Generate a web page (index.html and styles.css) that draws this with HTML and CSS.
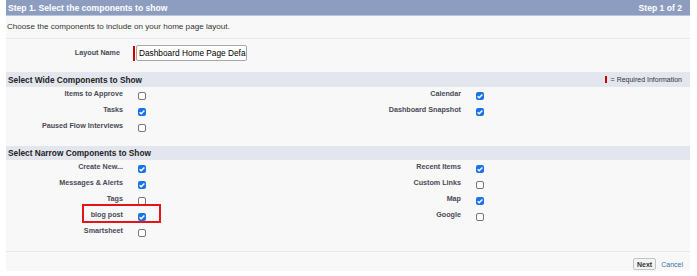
FILE: index.html
```html
<!DOCTYPE html>
<html>
<head>
<meta charset="utf-8">
<link rel="stylesheet" href="styles.css">
</head>
<body>
<div class="panel">
  <div class="pb-header">
    <span class="pb-title">Step 1. Select the components to show</span>
    <span class="pb-step">Step 1 of 2</span>
  </div>
  <div class="intro">Choose the components to include on your home page layout.</div>
  <div class="layout-row">
    <div class="label">Layout Name</div>
    <div class="data"><span class="req-bar"></span><span class="text-input">Dashboard Home Page Defa</span></div>
  </div>

  <div class="section-head">
    <span>Select Wide Components to Show</span>
    <span class="req-note"><span class="req-mark"></span>= Required Information</span>
  </div>
  <div class="grid wide">
    <div class="label">Items to Approve</div><div class="data"><span class="cb"></span></div>
    <div class="label">Calendar</div><div class="data"><span class="cb on"></span></div>
    <div class="label">Tasks</div><div class="data"><span class="cb on"></span></div>
    <div class="label">Dashboard Snapshot</div><div class="data"><span class="cb on"></span></div>
    <div class="label">Paused Flow Interviews</div><div class="data"><span class="cb"></span></div>
    <div class="label"></div><div class="data"></div>
  </div>

  <div class="section-head narrow-head">
    <span>Select Narrow Components to Show</span>
  </div>
  <div class="grid narrow">
    <div class="label">Create New...</div><div class="data"><span class="cb on"></span></div>
    <div class="label">Recent Items</div><div class="data"><span class="cb on"></span></div>
    <div class="label">Messages &amp; Alerts</div><div class="data"><span class="cb on"></span></div>
    <div class="label">Custom Links</div><div class="data"><span class="cb"></span></div>
    <div class="label">Tags</div><div class="data"><span class="cb"></span></div>
    <div class="label">Map</div><div class="data"><span class="cb on"></span></div>
    <div class="label">blog post</div><div class="data"><span class="cb on"></span></div>
    <div class="label">Google</div><div class="data"><span class="cb"></span></div>
    <div class="label">Smartsheet</div><div class="data"><span class="cb"></span></div>
    <div class="label"></div><div class="data"></div>
    <div class="highlight"></div>
  </div>

  <div class="footer">
    <span class="btn">Next</span>
    <span class="link">Cancel</span>
  </div>
</div>
</body>
</html>
```
FILE: styles.css
```css
html, body {
  margin: 0;
  padding: 0;
  background: #ffffff;
}
body {
  font-family: "Liberation Sans", Arial, sans-serif;
  color: #333;
}
.panel {
  margin-left: 6px;
  width: 684px;
  height: 271px;
  background: #f8f8f8;
  display: flex;
  flex-direction: column;
}
.pb-header {
  height: 15px;
  background: #8d9dc0;
  color: #fff;
  font-weight: bold;
  font-size: 8.6px;
  display: flex;
  justify-content: space-between;
  align-items: center;
  padding: 0 8px 0 2px;
  border-bottom: 1px solid #b9c4da;
}
.intro {
  height: 22px;
  line-height: 21px;
  font-size: 8.1px;
  color: #333;
  padding-left: 1px;
  border-bottom: 1px solid #e8e8e8;
}
.layout-row {
  display: grid;
  grid-template-columns: 124px 1fr;
  align-items: center;
  height: 28px;
}
.label {
  font-size: 7.2px;
  font-weight: bold;
  color: #4a4a56;
  text-align: right;
  padding-right: 7px;
  white-space: nowrap;
}
.layout-row .label {
  padding-right: 10px;
  margin-top: -2px;
}
.layout-row .data {
  display: flex;
  align-items: center;
  margin-left: 3px;
}
.req-bar {
  width: 2px;
  height: 15px;
  background: #c00;
  margin-right: 1px;
}
.text-input {
  width: 111px;
  height: 16px;
  box-sizing: border-box;
  border: 1px solid #a8a8a8;
  border-radius: 2px;
  background: #fff;
  font-size: 8.3px;
  line-height: 14px;
  padding-left: 2px;
  color: #000;
  white-space: nowrap;
}
.section-head {
  margin-top: 5px;
  height: 15px;
  background: #e3e6ef;
  display: flex;
  justify-content: space-between;
  align-items: center;
  padding: 0 8px 0 2px;
  font-size: 8.3px;
  font-weight: bold;
  color: #222;
}
.narrow-head {
  margin-top: 11px;
  height: 14px;
}
.req-note {
  display: flex;
  align-items: center;
  font-weight: normal;
  font-size: 7px;
  color: #333;
}
.req-mark {
  width: 2px;
  height: 7px;
  background: #c00;
  margin-right: 4px;
}
.grid {
  position: relative;
  display: grid;
  grid-template-columns: 124px 214px 124px 1fr;
  grid-auto-rows: 16px;
}
.grid .label {
  line-height: 14px;
}
.grid .data {
  padding-left: 8px;
  display: flex;
  align-items: center;
}
.cb {
  width: 8px;
  height: 8px;
  box-sizing: border-box;
  border: 1px solid #767676;
  border-radius: 2px;
  background: #fff;
  margin-top: 1px;
}
.cb.on {
  border: none;
  background: #1a73e8 url("data:image/svg+xml;utf8,<svg xmlns='http://www.w3.org/2000/svg' viewBox='0 0 8 8'><path d='M1.6 4.2 L3.2 5.8 L6.4 2.4' fill='none' stroke='white' stroke-width='1.4'/></svg>") no-repeat center/8px 8px;
}
.highlight {
  position: absolute;
  left: 76px;
  top: 44px;
  width: 79px;
  height: 19px;
  box-sizing: border-box;
  border: 2px solid #e4141b;
}
.footer {
  margin-top: auto;
  height: 19px;
  border-top: 1px solid #e8e8e8;
  display: flex;
  justify-content: flex-end;
  align-items: center;
  padding-right: 7px;
  gap: 5px;
}
.btn {
  font-size: 7px;
  font-weight: bold;
  color: #333;
  background: #f4f4f4;
  border: 1px solid #c4c4c4;
  border-radius: 2px;
  height: 12px;
  line-height: 11px;
  padding: 0 3px;
  box-sizing: border-box;
  margin-top: 5px;
}
.link {
  font-size: 7px;
  color: #3d6ea8;
  margin-top: 5px;
}
```
